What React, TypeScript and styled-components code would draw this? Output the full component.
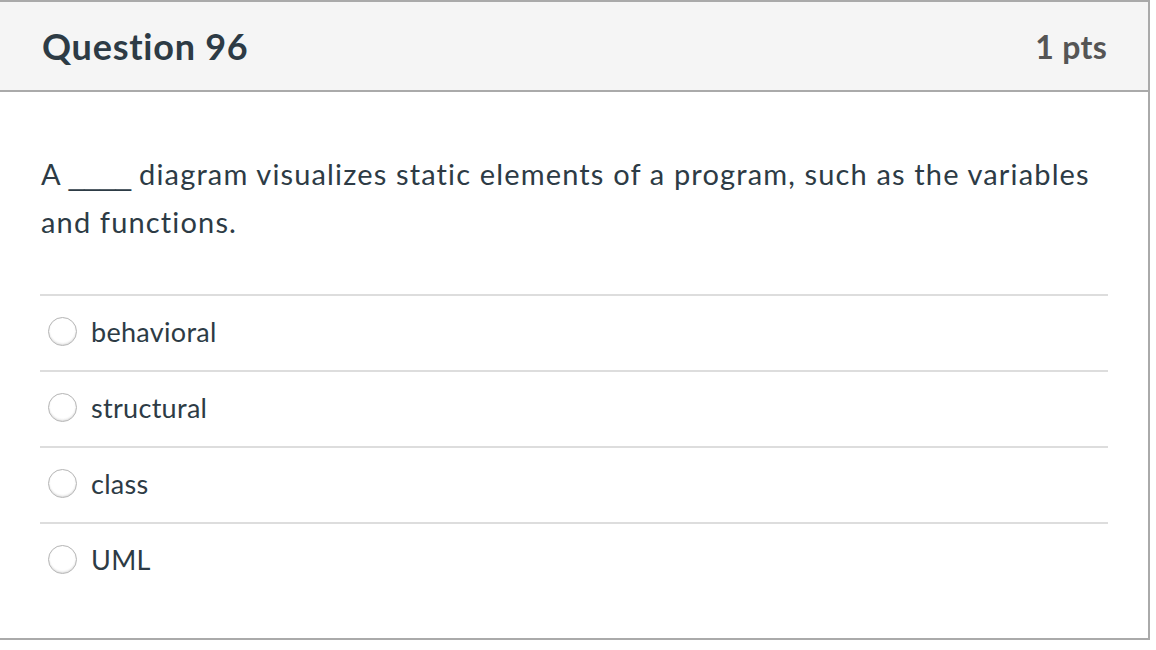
import React from "react";
import styled, { createGlobalStyle } from "styled-components";

const Global = createGlobalStyle`
  html, body { margin: 0; padding: 0; background: #fff; }
  body {
    font-family: Lato, "Noto Sans", sans-serif;
    color: #2d3b45;
    font-variant-ligatures: none;
    font-feature-settings: "liga" 0;
  }
`;

const Card = styled.div`
  box-sizing: border-box;
  width: 1152px;
  height: 640px;
  margin-left: -2px;
  border: 2px solid #aaaaaa;
  display: flex;
  flex-direction: column;
`;

const Header = styled.div`
  box-sizing: border-box;
  height: 90px;
  background: #f5f5f5;
  border-bottom: 2px solid #aaaaaa;
  display: flex;
  align-items: center;
  justify-content: space-between;
  padding: 0 41px 0 42px;
`;

const Title = styled.h2`
  margin: 0;
  font-family: Lato, sans-serif;
  font-weight: 700;
  font-size: 36px;
  letter-spacing: 0.75px;
  color: #2d3b45;
`;

const Points = styled.div`
  font-family: Lato, sans-serif;
  font-weight: 700;
  font-size: 32px;
  letter-spacing: 0.3px;
  color: #555555;
`;

const Body = styled.div`
  padding: 58px 40px 0 40px;
`;

const QuestionText = styled.p`
  margin: 0 0 48px 1px;
  font-size: 29px;
  letter-spacing: 1.15px;
  line-height: 48px;
`;

const Blank = styled.span`
  font-family: "Liberation Sans", Arial, sans-serif;
  font-size: 28px;
  line-height: 1;
  letter-spacing: 0;
  margin: 0 8px 0 7px;
`;

const Answers = styled.div`
  display: flex;
  flex-direction: column;
`;

const Answer = styled.label`
  box-sizing: border-box;
  height: 76px;
  border-top: 2px solid #dddddd;
  display: flex;
  align-items: center;
  gap: 14px;
  padding: 0 0 4px 8px;
`;

const Radio = styled.span`
  box-sizing: border-box;
  width: 29px;
  height: 29px;
  border-radius: 50%;
  border: 1px solid #b5b5b5;
  background: radial-gradient(circle at 50% 40%, #ffffff 60%, #f0f0f0 100%);
  box-shadow: inset 0 -1px 2px rgba(0, 0, 0, 0.12);
  flex: none;
`;

const AnswerText = styled.span`
  font-size: 27px;
  letter-spacing: 0.3px;
  color: #2d3b45;
`;

const answers = ["behavioral", "structural", "class", "UML"];

export default function App() {
  return (
    <>
      <Global />
      <Card>
        <Header>
          <Title>Question 96</Title>
          <Points>1 pts</Points>
        </Header>
        <Body>
          <QuestionText>
            A<Blank>____</Blank>diagram visualizes static elements of a program, such as the variables and functions.
          </QuestionText>
          <Answers>
            {answers.map((a) => (
              <Answer key={a}>
                <Radio />
                <AnswerText>{a}</AnswerText>
              </Answer>
            ))}
          </Answers>
        </Body>
      </Card>
    </>
  );
}
